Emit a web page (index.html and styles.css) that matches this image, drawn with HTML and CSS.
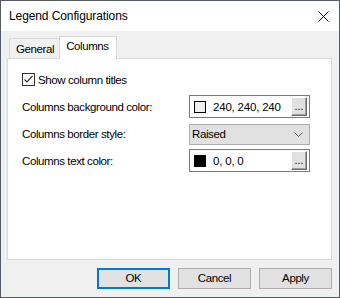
FILE: index.html
```html
<!DOCTYPE html>
<html>
<head>
<meta charset="utf-8">
<link rel="stylesheet" href="styles.css">
</head>
<body>
<div class="window">
  <div class="titlebar">
    <span class="title">Legend Configurations</span>
    <svg class="close" width="11" height="11" viewBox="0 0 11 11"><path d="M0.5 0.5 L10.5 10.5 M10.5 0.5 L0.5 10.5" stroke="#000" stroke-width="1" fill="none"/></svg>
  </div>
  <div class="client">
    <div class="tabs">
      <div class="tab">General</div>
      <div class="tab active">Columns</div>
    </div>
    <div class="panel">
      <label class="check-row">
        <span class="checkbox"><svg width="11" height="11" viewBox="0 0 11 11"><path d="M1.5 5.5 L4 8 L9.5 2" stroke="#333" stroke-width="1.2" fill="none"/></svg></span>
        <span>Show column titles</span>
      </label>
      <div class="grid">
        <div class="label">Columns background color:</div>
        <div class="colorbox">
          <span class="swatch light"></span>
          <span class="value">240, 240, 240</span>
          <span class="dots">...</span>
        </div>
        <div class="label">Columns border style:</div>
        <div class="select">
          <span>Raised</span>
          <svg width="9" height="5" viewBox="0 0 9 5"><path d="M0.5 0.5 L4.5 4.5 L8.5 0.5" stroke="#606060" stroke-width="1" fill="none"/></svg>
        </div>
        <div class="label">Columns text color:</div>
        <div class="colorbox">
          <span class="swatch dark"></span>
          <span class="value">0, 0, 0</span>
          <span class="dots">...</span>
        </div>
      </div>
    </div>
    <div class="buttons">
      <div class="btn default">OK</div>
      <div class="btn">Cancel</div>
      <div class="btn">Apply</div>
    </div>
  </div>
</div>
</body>
</html>
```
FILE: styles.css
```css
* { box-sizing: border-box; }
html, body { margin: 0; padding: 0; }
body {
  font-family: "Liberation Sans", Arial, sans-serif;
  font-size: 11.5px;
  letter-spacing: -0.4px;
  color: #000;
  background: #fff;
}
.window {
  width: 340px;
  height: 298px;
  border: 1px solid #555c63;
  display: flex;
  flex-direction: column;
  background: #f0f0f0;
}
.titlebar {
  height: 30px;
  background: #fff;
  display: flex;
  align-items: center;
  justify-content: space-between;
  padding: 0 10px 0 8px;
}
.title { font-size: 12px; line-height: 16px; letter-spacing: -0.1px; }
.close { display: block; }
.client {
  flex: 1;
  display: flex;
  flex-direction: column;
  padding: 5px 7px 0 6px;
}
.tabs {
  display: flex;
  align-items: flex-end;
  height: 22px;
  padding-left: 2px;
}
.tab {
  height: 20px;
  border: 1px solid #d9d9d9;
  border-bottom: none;
  background: #f0f0f0;
  padding: 0 5px 0 6px;
  line-height: 21px;
}
.tab.active {
  height: 23px;
  background: #fff;
  margin-left: -1px;
  margin-bottom: -1px;
  padding: 0 7px 0 6px;
  line-height: 19px;
  position: relative;
  z-index: 1;
}
.panel {
  height: 202px;
  background: #fff;
  border: 1px solid #d9d9d9;
  padding: 14px 21px 0 14px;
}
.check-row {
  display: flex;
  align-items: center;
  gap: 3px;
  height: 13px;
}
.checkbox {
  width: 13px;
  height: 13px;
  border: 1px solid #333;
  background: #fff;
  display: flex;
  align-items: center;
  justify-content: center;
}
.checkbox svg { display: block; }
.grid {
  display: grid;
  grid-template-columns: 1fr 121px;
  grid-template-rows: 23px 21px 23px;
  row-gap: 5px;
  margin-top: 9px;
  align-items: center;
}
.grid .select { margin-top: 1px; }
.label { line-height: 16px; }
.colorbox {
  height: 23px;
  border: 1px solid #7a7a7a;
  background: #fff;
  display: flex;
  align-items: center;
  padding: 0 2px 0 4px;
}
.swatch {
  width: 12px;
  height: 12px;
  border: 1px solid #000;
  flex: none;
}
.swatch.light { background: #f0f0f0; }
.swatch.dark { background: #000; }
.value { margin-left: 7px; flex: 1; letter-spacing: -0.2px; }
.dots {
  width: 16px;
  height: 19px;
  background: #e1e1e1;
  border-top: 1px solid #fff;
  border-left: 1px solid #fff;
  border-right: 1px solid #696969;
  border-bottom: 1px solid #696969;
  box-shadow: inset -1px -1px 0 #a0a0a0;
  font-size: 11px;
  line-height: 16px;
  text-align: center;
  letter-spacing: 0;
  flex: none;
}
.select {
  height: 21px;
  border: 1px solid #adadad;
  background: #e1e1e1;
  display: flex;
  align-items: center;
  justify-content: space-between;
  padding: 0 6px 0 2px;
}
.select svg { display: block; }
.buttons {
  display: flex;
  justify-content: flex-end;
  gap: 8px;
  margin-top: 8px;
}
.btn {
  width: 73px;
  height: 21px;
  border: 1px solid #adadad;
  background: #e1e1e1;
  text-align: center;
  line-height: 19px;
}
.btn.default {
  border: 2px solid #0078d7;
  line-height: 17px;
}
```
